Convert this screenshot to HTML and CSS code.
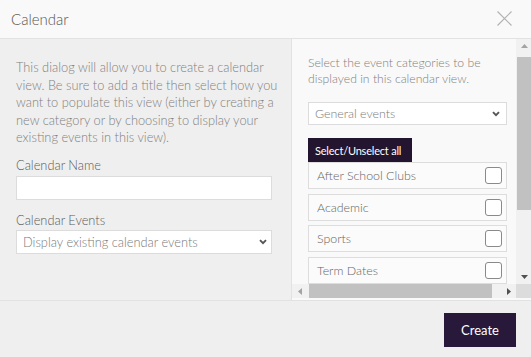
FILE: index.html
```html
<!DOCTYPE html>
<html>
<head>
<meta charset="utf-8">
<link rel="stylesheet" href="styles.css">
</head>
<body>
<div class="dialog">
  <div class="header">
    <span class="title">Calendar</span>
    <svg class="close" width="15" height="15" viewBox="0 0 15 15"><path d="M0.5 0.5L14.5 14.5M14.5 0.5L0.5 14.5" stroke="#b3b3b3" stroke-width="1.2" fill="none"/></svg>
  </div>
  <div class="body">
    <div class="left">
      <p class="intro">This dialog will allow you to create a calendar view. Be sure to add a title then select how you want to populate this view (either by creating a new category or by choosing to display your existing events in this view).</p>
      <div class="label">Calendar Name</div>
      <div class="input"></div>
      <div class="label label-events">Calendar Events</div>
      <div class="select select-left">
        <span>Display existing calendar events</span>
        <svg width="8" height="6" viewBox="0 0 8 6"><path d="M1 1.2L4 4.2L7 1.2" stroke="#555" stroke-width="1.9" fill="none"/></svg>
      </div>
    </div>
    <div class="right">
      <div class="content">
        <p class="hint">Select the event categories to be displayed in this calendar view.</p>
        <div class="select select-right">
          <span>General events</span>
          <svg width="8" height="6" viewBox="0 0 8 6"><path d="M1 1.2L4 4.2L7 1.2" stroke="#555" stroke-width="1.9" fill="none"/></svg>
        </div>
        <div class="toggle">Select/Unselect all</div>
        <div class="items">
          <div class="item"><span>After School Clubs</span><span class="check"></span></div>
          <div class="item"><span>Academic</span><span class="check"></span></div>
          <div class="item"><span>Sports</span><span class="check"></span></div>
          <div class="item"><span>Term Dates</span><span class="check"></span></div>
        </div>
      </div>
      <div class="vscroll">
        <div class="arrow-box"><svg width="7" height="4" viewBox="0 0 7 4"><path d="M0 4L3.5 0L7 4Z" fill="#a3a3a3"/></svg></div>
        <div class="vtrack"><div class="vthumb"></div></div>
        <div class="arrow-box"><svg width="7" height="4" viewBox="0 0 7 4"><path d="M0 0L3.5 4L7 0Z" fill="#505050"/></svg></div>
      </div>
      <div class="hscroll">
        <div class="harrow"><svg width="4" height="7" viewBox="0 0 4 7"><path d="M4 0L0 3.5L4 7Z" fill="#a3a3a3"/></svg></div>
        <div class="htrack"><div class="hthumb"></div></div>
        <div class="harrow"><svg width="4" height="7" viewBox="0 0 4 7"><path d="M0 0L4 3.5L0 7Z" fill="#505050"/></svg></div>
      </div>
      <div class="corner"></div>
    </div>
  </div>
  <div class="footer">
    <button class="create">Create</button>
  </div>
</div>
</body>
</html>
```

FILE: styles.css
```css
* { box-sizing: border-box; }
html, body { margin: 0; padding: 0; }
body {
  width: 531px;
  height: 357px;
  overflow: hidden;
  font-family: "Lato Light", Lato, "Open Sans", sans-serif;
  font-weight: 300;
  background: #efefef;
}
.dialog { display: flex; flex-direction: column; height: 357px; }
.header {
  height: 39px;
  flex: none;
  background: #f9f9f9;
  border-bottom: 1px solid #e2e2e2;
  display: flex;
  align-items: center;
  justify-content: space-between;
  padding: 0 19px 1px 11px;
}
.title { font-size: 15px; color: #555; }
.body {
  height: 262px;
  flex: none;
  display: flex;
  border-bottom: 1px solid #e2e2e2;
}
.left {
  width: 292px;
  flex: none;
  background: #efefef;
  border-right: 1px solid #e2e2e2;
  padding: 20px 16px 0 16px;
}
.intro {
  margin: 0;
  font-size: 12.8px;
  line-height: 17.5px;
  color: #808080;
  width: 268px;
}
.label {
  font-size: 12.8px;
  line-height: 17.5px;
  color: #5a5a5a;
  margin-top: 10px;
  margin-bottom: 2px;
}
.label-events { margin-top: 12px; margin-bottom: 0; }
.input {
  width: 256px;
  height: 24px;
  background: #fff;
  border: 1px solid #dcdcdc;
}
.select {
  background: #fff;
  border: 1px solid #dcdcdc;
  display: flex;
  align-items: center;
  justify-content: space-between;
  color: #7a7a7a;
}
.select-left {
  width: 256px;
  height: 24px;
  padding: 0 4px 0 6px;
  font-size: 12.8px;
}
.right {
  flex: 1;
  display: grid;
  grid-template-columns: 224px 15px;
  grid-template-rows: 245px 14px;
  background: #f9f9f9;
}
.content {
  overflow: hidden;
  padding: 16px 9px 0 16px;
}
.hint {
  margin: 0;
  font-size: 12.2px;
  line-height: 16px;
  color: #808080;
  width: 200px;
}
.select-right {
  margin-top: 15px;
  width: 199px;
  height: 23px;
  padding: 0 6px 0 6px;
  font-size: 12.4px;
}
.toggle {
  margin-top: 13px;
  width: 104px;
  height: 24px;
  background: #23152f;
  color: #fff;
  font-family: Lato, "Open Sans", sans-serif;
  font-size: 11px;
  font-weight: 400;
  display: flex;
  align-items: center;
  padding-left: 7px;
  letter-spacing: -0.2px;
}
.items { display: flex; flex-direction: column; gap: 4.5px; margin-top: 0; }
.item {
  width: 199px;
  height: 27px;
  flex: none;
  border: 1px solid #dddddd;
  background: #fbfbfb;
  display: flex;
  align-items: center;
  justify-content: space-between;
  padding: 0 4px 0 8px;
  font-size: 12.4px;
  color: #666;
}
.check {
  width: 17px;
  height: 17px;
  border: 1px solid #8a8a8a;
  border-radius: 3px;
  background: #fff;
}
.vscroll {
  background: #f1f1f1;
  display: flex;
  flex-direction: column;
}
.arrow-box {
  height: 14px;
  flex: none;
  display: flex;
  align-items: center;
  justify-content: center;
  padding-left: 1px;
}
.vtrack { flex: 1; padding-top: 4px; }
.vthumb { height: 153px; background: #c1c1c1; margin-left: 1px; }
.hscroll {
  background: #f1f1f1;
  display: flex;
}
.harrow {
  width: 15px;
  flex: none;
  display: flex;
  align-items: center;
  justify-content: center;
}
.htrack { flex: 1; padding-left: 2px; padding-right: 9px; display: flex; }
.hthumb { flex: 1; background: #c1c1c1; }
.corner { background: #dcdcdc; }
.footer {
  flex: 1;
  background: #efefef;
  display: flex;
  justify-content: flex-end;
  align-items: flex-start;
  padding: 12px 15px 0 0;
}
.create {
  width: 72px;
  height: 34px;
  background: #28193a;
  color: #fff;
  border: none;
  font-family: Lato, "Open Sans", sans-serif;
  font-weight: 400;
  font-size: 13px;
  padding: 0;
}
```
